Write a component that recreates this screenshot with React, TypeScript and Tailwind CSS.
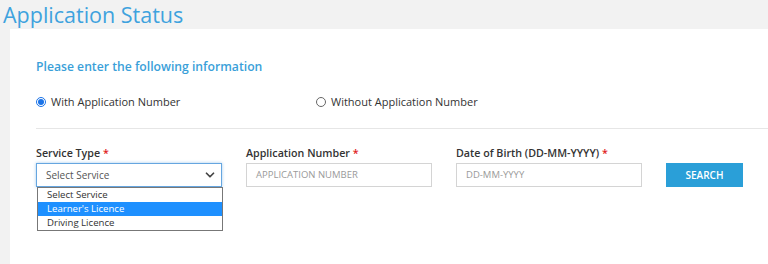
import { ChevronDown } from 'lucide-react';

const font = { fontFamily: '"Open Sans", "Liberation Sans", sans-serif' };

function Label({ text }: { text: string }) {
  return (
    <div className="text-[10.7px] font-semibold text-[#333] leading-[16px] h-[16px] mb-[2px]">
      {text} <span className="text-[#e02020]">*</span>
    </div>
  );
}

export default function App() {
  const options = ['Select Service', "Learner's Licence", 'Driving Licence'];

  return (
    <div className="w-[768px] h-[264px] overflow-hidden bg-[#f2f2f2]" style={font}>
      <h1 className="pl-[3px] pt-[1px] text-[21.5px] leading-[28px] h-[29px] text-[#3ea2de] font-normal">
        Application Status
      </h1>
      <div className="ml-[10px] bg-white h-[240px] pl-[26px] pt-[30px]">
        <h2 className="text-[12.2px] leading-[16px] font-semibold text-[#3a9fd9]">
          Please enter the following information
        </h2>

        <div className="flex items-center mt-[19px] h-[16px] text-[11px] text-[#333]">
          <label className="flex items-center gap-[5px] w-[280px]">
            <span className="w-[10px] h-[10px] rounded-full border border-[#1a73e8] flex items-center justify-center">
              <span className="w-[6px] h-[6px] rounded-full bg-[#1a73e8]" />
            </span>
            With Application Number
          </label>
          <label className="flex items-center gap-[5px]">
            <span className="w-[10px] h-[10px] rounded-full border border-[#666]" />
            Without Application Number
          </label>
        </div>

        <div className="mt-[18px] border-t border-[#e6e6e6]" />

        <div className="flex items-end gap-[24px] mt-[16px]">
          <div className="w-[186px] relative">
            <Label text="Service Type" />
            <div className="h-[24px] border border-[#66a6e0] shadow-[0_0_3px_rgba(102,166,224,0.6)] flex items-center justify-between pl-[9px] pr-[4px] text-[10px] text-[#555]">
              <span>Select Service</span>
              <ChevronDown size={14} strokeWidth={3} className="text-[#444]" />
            </div>
            <div className="absolute left-[1px] top-[42px] w-[186px] border border-[#777] bg-white text-[9.6px]">
              {options.map((o, i) => (
                <div
                  key={o}
                  className={`h-[14px] leading-[14px] pl-[9px] ${
                    i === 1 ? 'bg-[#1e90ff] text-white' : 'text-[#333]'
                  }`}
                >
                  {o}
                </div>
              ))}
            </div>
          </div>

          <div className="w-[186px]">
            <Label text="Application Number" />
            <div className="h-[24px] border border-[#d4d4d4] flex items-center pl-[9px] text-[9.5px] text-[#9a9a9a]">
              APPLICATION NUMBER
            </div>
          </div>

          <div className="w-[186px]">
            <Label text="Date of Birth (DD-MM-YYYY)" />
            <div className="h-[24px] border border-[#d4d4d4] flex items-center pl-[9px] text-[9.5px] text-[#9a9a9a]">
              DD-MM-YYYY
            </div>
          </div>

          <button className="w-[77px] h-[24px] bg-[#2a9fd8] text-white text-[10px] font-semibold">
            SEARCH
          </button>
        </div>
      </div>
    </div>
  );
}
